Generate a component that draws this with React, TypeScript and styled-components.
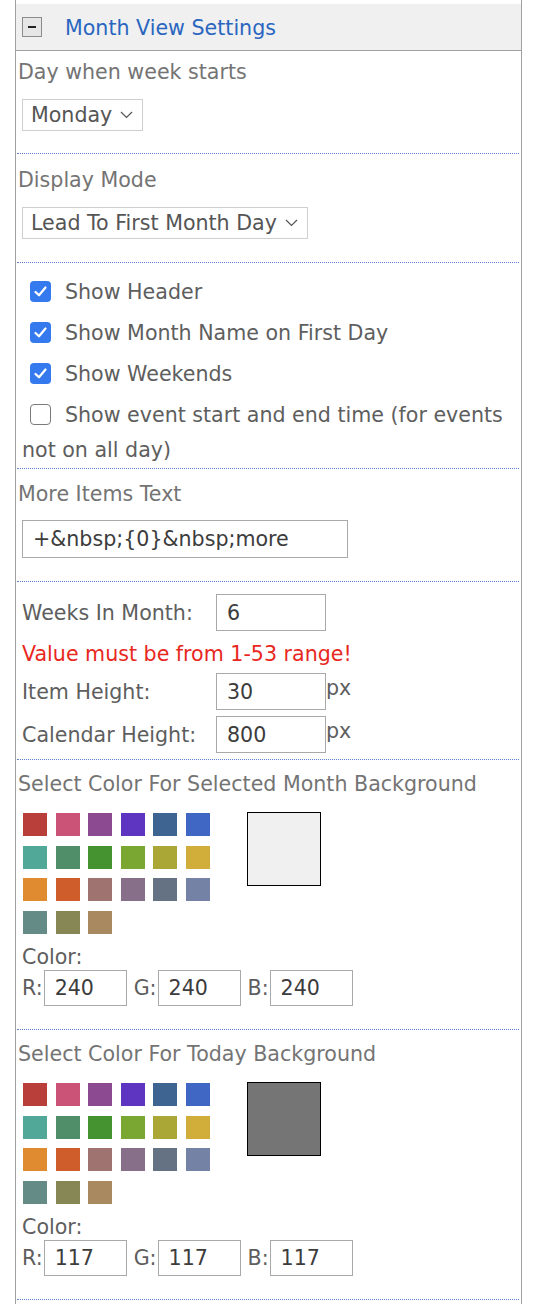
import React from "react";
import styled, { createGlobalStyle } from "styled-components";

const GlobalStyle = createGlobalStyle`
  body {
    margin: 0;
    background: #fff;
    font-family: "DejaVu Sans", Verdana, sans-serif;
    font-size: 20.6px;
  }
  * { box-sizing: border-box; }
`;

const palette = [
  "#b9403a", "#cc5378", "#8c4a91", "#5e35c1", "#3e6592", "#4167c4",
  "#52a898", "#4f8e68", "#449330", "#79a731", "#aaa737", "#d1ad3a",
  "#e08b30", "#cf5d2c", "#9f7370", "#876f8a", "#657284", "#7482a6",
  "#658b86", "#878755", "#a98a60",
];

const Panel = styled.div`
  margin-left: 15px;
  width: 507px;
  border-left: 1px solid #a0a0a0;
  border-right: 1px solid #a0a0a0;
  padding-top: 4px;
  padding-bottom: 20px;
`;

const Header = styled.div`
  display: flex;
  align-items: center;
  height: 47px;
  padding-left: 6px;
  background: #f0f0f0;
  border-bottom: 1px solid #a0a0a0;
`;

const ToggleBox = styled.span`
  display: flex;
  align-items: center;
  justify-content: center;
  width: 20px;
  height: 20px;
  border: 1px solid #8c8c8c;
  background: #e6e6e6;

  &::before {
    content: "";
    width: 8px;
    height: 2px;
    background: #222;
  }
`;

const Title = styled.span`
  margin-left: 23px;
  padding-top: 2px;
  color: #2a66c0;
  line-height: 24px;
`;

const Section = styled.div<{ $top: number; $bottom: number }>`
  margin: 0 2px 0 1px;
  padding: ${(p) => p.$top}px 0 ${(p) => p.$bottom}px;
  border-bottom: 1px dotted #5b7fd0;
`;

const Label = styled.div`
  padding: 1px 0 0 1px;
  color: #747474;
  line-height: 24px;
`;

const SelectBox = styled.div`
  display: inline-flex;
  align-items: center;
  gap: 8px;
  height: 32px;
  margin: 15px 0 0 5px;
  padding: 0 9px 0 8px;
  border: 1px solid #cfcfcf;
  color: #555;
`;

const Chevron = () => (
  <svg width="13" height="8" viewBox="0 0 13 8">
    <polyline points="1,1 6.5,6.5 12,1" fill="none" stroke="#555" strokeWidth="1.2" />
  </svg>
);

const CheckList = styled.div`
  padding-left: 5px;
`;

const CheckRow = styled.div`
  color: #5e5e5e;
  line-height: 35px;
  padding-top: 1px;
  & + & { margin-top: 5px; }
`;

const Check = styled.span<{ $checked?: boolean }>`
  display: inline-flex;
  align-items: center;
  justify-content: center;
  vertical-align: top;
  width: 21px;
  height: 21px;
  margin: 6px 14px 0 8px;
  border-radius: 4px;
  background: ${(p) => (p.$checked ? "#3479ed" : "#fff")};
  border: ${(p) => (p.$checked ? "none" : "1.5px solid #7a7a7a")};
`;

const Tick = () => (
  <svg width="13" height="11" viewBox="0 0 13 11">
    <polyline points="1.5,6 5,9.3 11.5,1.5" fill="none" stroke="#fff" strokeWidth="2.2" strokeLinecap="round" strokeLinejoin="round" />
  </svg>
);

const TextField = styled.input<{ $w: number; $h?: number }>`
  width: ${(p) => p.$w}px;
  height: ${(p) => p.$h ?? 37}px;
  padding: 0 0 0 10px;
  border: 1px solid #a9a9a9;
  font-family: inherit;
  font-size: inherit;
  color: #3c3c3c;
  background: #fff;
  outline: none;
`;

const WideField = styled(TextField)`
  display: block;
  margin: 14px 0 0 5px;
`;

const FieldGrid = styled.div`
  display: grid;
  grid-template-columns: 194px auto;
  grid-template-rows: 37px 30px 37px 37px;
  row-gap: 6px;
  padding-left: 5px;
  align-items: center;
  color: #5e5e5e;
`;

const FieldCell = styled.div`
  display: flex;
  align-items: flex-start;
  height: 100%;
`;

const Unit = styled.span`
  color: #5e5e5e;
  line-height: 30px;
`;

const ErrorText = styled.div`
  grid-column: 1 / 3;
  padding-top: 3px;
  color: #e8281d;
`;

const PaletteRow = styled.div`
  display: flex;
  align-items: flex-start;
  gap: 37.5px;
  margin: 16px 0 0 6px;
`;

const SwatchGrid = styled.div`
  display: grid;
  grid-template-columns: repeat(6, 24px);
  grid-auto-rows: 23px;
  column-gap: 8.5px;
  row-gap: 9.5px;
  padding-top: 1px;
`;

const Swatch = styled.span<{ $c: string }>`
  background: ${(p) => p.$c};
`;

const Preview = styled.div<{ $c: string }>`
  width: 74px;
  height: 74px;
  border: 1px solid #000;
  background: ${(p) => p.$c};
`;

const ColorLabel = styled.div`
  margin-top: 11.5px;
  padding-left: 5px;
  color: #5e5e5e;
  line-height: 24px;
`;

const RgbRow = styled.div`
  display: flex;
  align-items: center;
  margin-top: 1px;
  padding-left: 5px;
  color: #5e5e5e;
`;

const RgbLabel = styled.span<{ $first?: boolean }>`
  margin: 0 1px 0 ${(p) => (p.$first ? 0 : 7)}px;
`;

const ColorPicker: React.FC<{ title: string; value: number }> = ({ title, value }) => {
  const c = `rgb(${value}, ${value}, ${value})`;
  return (
    <Section $top={11} $bottom={23}>
      <Label>{title}</Label>
      <PaletteRow>
        <SwatchGrid>
          {palette.map((p) => (
            <Swatch key={p} $c={p} />
          ))}
        </SwatchGrid>
        <Preview $c={c} />
      </PaletteRow>
      <ColorLabel>Color:</ColorLabel>
      <RgbRow>
        <RgbLabel $first>R:</RgbLabel>
        <TextField $w={83} $h={36} readOnly value={value} />
        <RgbLabel>G:</RgbLabel>
        <TextField $w={83} $h={36} readOnly value={value} />
        <RgbLabel>B:</RgbLabel>
        <TextField $w={83} $h={36} readOnly value={value} />
      </RgbRow>
    </Section>
  );
};

const checks = [
  { label: "Show Header", on: true },
  { label: "Show Month Name on First Day", on: true },
  { label: "Show Weekends", on: true },
  { label: "Show event start and end time (for events not on all day)", on: false },
];

export default function App() {
  return (
    <>
      <GlobalStyle />
      <Panel>
        <Header>
          <ToggleBox />
          <Title>Month View Settings</Title>
        </Header>

        <Section $top={8} $bottom={22}>
          <Label>Day when week starts</Label>
          <SelectBox>
            Monday
            <Chevron />
          </SelectBox>
        </Section>

        <Section $top={13} $bottom={23}>
          <Label>Display Mode</Label>
          <SelectBox>
            Lead To First Month Day
            <Chevron />
          </SelectBox>
        </Section>

        <Section $top={11} $bottom={0}>
          <CheckList>
            {checks.map((c) => (
              <CheckRow key={c.label}>
                <Check $checked={c.on}>{c.on && <Tick />}</Check>
                {c.label}
              </CheckRow>
            ))}
          </CheckList>
        </Section>

        <Section $top={12} $bottom={23}>
          <Label>More Items Text</Label>
          <WideField $w={326} $h={38} readOnly value={"+&nbsp;{0}&nbsp;more"} />
        </Section>

        <Section $top={12} $bottom={6}>
          <FieldGrid>
            <span>Weeks In Month:</span>
            <FieldCell>
              <TextField $w={110} readOnly value="6" />
            </FieldCell>
            <ErrorText>Value must be from 1-53 range!</ErrorText>
            <span>Item Height:</span>
            <FieldCell>
              <TextField $w={110} readOnly value="30" />
              <Unit>px</Unit>
            </FieldCell>
            <span>Calendar Height:</span>
            <FieldCell>
              <TextField $w={110} readOnly value="800" />
              <Unit>px</Unit>
            </FieldCell>
          </FieldGrid>
        </Section>

        <ColorPicker title="Select Color For Selected Month Background" value={240} />
        <ColorPicker title="Select Color For Today Background" value={117} />
      </Panel>
    </>
  );
}
